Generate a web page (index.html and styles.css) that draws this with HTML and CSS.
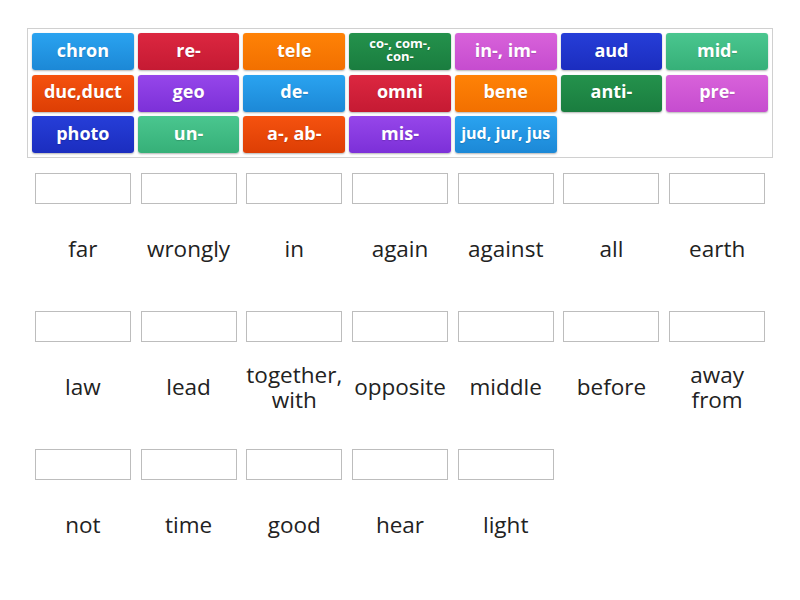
FILE: index.html
```html
<!DOCTYPE html>
<html>
<head>
    <meta charset="UTF-8">
    <title>Match up</title>
    <link rel="stylesheet" href="styles.css">
</head>
<body>
    <section class="tray">
        <div class="tile blue">chron</div>
        <div class="tile red">re-</div>
        <div class="tile orange">tele</div>
        <div class="tile green small">co-, com-, con-</div>
        <div class="tile magenta">in-, im-</div>
        <div class="tile navy">aud</div>
        <div class="tile teal">mid-</div>

        <div class="tile flame">duc,duct</div>
        <div class="tile purple">geo</div>
        <div class="tile blue">de-</div>
        <div class="tile red">omni</div>
        <div class="tile orange">bene</div>
        <div class="tile green">anti-</div>
        <div class="tile magenta">pre-</div>

        <div class="tile navy">photo</div>
        <div class="tile teal">un-</div>
        <div class="tile flame">a-, ab-</div>
        <div class="tile purple">mis-</div>
        <div class="tile blue medium">jud, jur, jus</div>
    </section>

    <section class="targets">
        <div class="slot"><div class="box"></div><div class="label">far</div></div>
        <div class="slot"><div class="box"></div><div class="label">wrongly</div></div>
        <div class="slot"><div class="box"></div><div class="label">in</div></div>
        <div class="slot"><div class="box"></div><div class="label">again</div></div>
        <div class="slot"><div class="box"></div><div class="label">against</div></div>
        <div class="slot"><div class="box"></div><div class="label">all</div></div>
        <div class="slot"><div class="box"></div><div class="label">earth</div></div>

        <div class="slot"><div class="box"></div><div class="label">law</div></div>
        <div class="slot"><div class="box"></div><div class="label">lead</div></div>
        <div class="slot"><div class="box"></div><div class="label">together, with</div></div>
        <div class="slot"><div class="box"></div><div class="label">opposite</div></div>
        <div class="slot"><div class="box"></div><div class="label">middle</div></div>
        <div class="slot"><div class="box"></div><div class="label">before</div></div>
        <div class="slot"><div class="box"></div><div class="label">away from</div></div>

        <div class="slot"><div class="box"></div><div class="label">not</div></div>
        <div class="slot"><div class="box"></div><div class="label">time</div></div>
        <div class="slot"><div class="box"></div><div class="label">good</div></div>
        <div class="slot"><div class="box"></div><div class="label">hear</div></div>
        <div class="slot"><div class="box"></div><div class="label">light</div></div>
    </section>
</body>
</html>
```

FILE: styles.css
```css
body {
    font-family: "Open Sans", "DejaVu Sans", sans-serif;
    background-color: #fff;
    margin: 0;
    padding: 28px 27px 0 27px;
}

.tray {
    display: grid;
    grid-template-columns: repeat(7, 1fr);
    grid-auto-rows: 37px;
    gap: 4.5px 4px;
    padding: 4px;
    border: 1px solid #d0d0d0;
    height: 120px;
}

.tile {
    display: flex;
    align-items: center;
    justify-content: center;
    text-align: center;
    color: #fff;
    font-weight: bold;
    font-size: 18px;
    line-height: 20px;
    border-radius: 3px;
    text-shadow: 0 1px 1px rgba(0, 0, 0, 0.15);
    box-shadow: 0 1px 2px rgba(0, 0, 0, 0.3);
    padding-bottom: 4px;
    box-sizing: border-box;
}

.tile.small {
    font-size: 13px;
    line-height: 13px;
    padding: 0 12px 3px;
}

.tile.medium {
    font-size: 16px;
    white-space: nowrap;
}

.blue    { background: linear-gradient(#2aa3f0, #1c88d6); }
.red     { background: linear-gradient(#dc2740, #c51a33); }
.orange  { background: linear-gradient(#ff8206, #f27000); }
.green   { background: linear-gradient(#24924c, #1a7d3f); }
.magenta { background: linear-gradient(#d862da, #c64ccf); }
.navy    { background: linear-gradient(#263ed8, #1b2dbf); }
.teal    { background: linear-gradient(#4ac68f, #36b078); }
.flame   { background: linear-gradient(#f5520f, #dd3e04); }
.purple  { background: linear-gradient(#9646ea, #7c30d8); }

.targets {
    display: grid;
    grid-template-columns: repeat(7, 1fr);
    row-gap: 15px;
    margin: 15px 3px 0 3px;
}

.slot {
    display: flex;
    flex-direction: column;
    align-items: center;
}

.box {
    width: 96px;
    height: 31px;
    box-sizing: border-box;
    border: 1px solid #bdbdbd;
}

.label {
    height: 92px;
    display: flex;
    align-items: center;
    justify-content: center;
    text-align: center;
    font-size: 22.5px;
    line-height: 25px;
    color: #222;
    padding-bottom: 3px;
    box-sizing: border-box;
}
```
